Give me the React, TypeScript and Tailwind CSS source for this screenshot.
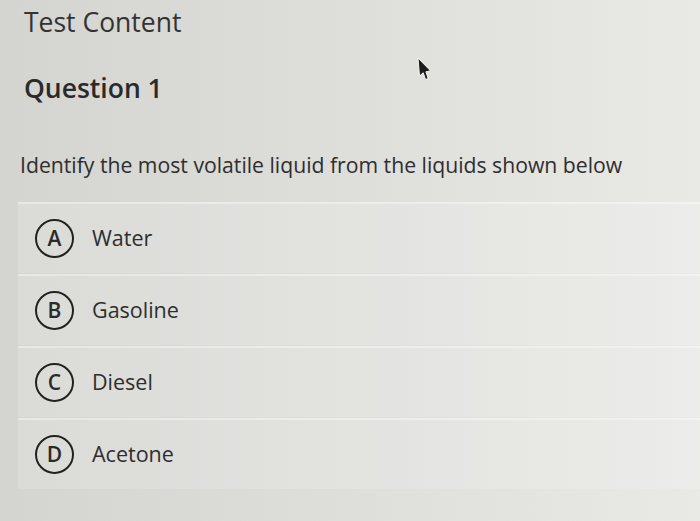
import React from 'react';

const OPTIONS = [
    { letter: 'A', label: 'Water' },
    { letter: 'B', label: 'Gasoline' },
    { letter: 'C', label: 'Diesel' },
    { letter: 'D', label: 'Acetone' },
];

export default function App() {
    return (
        <div
            className="relative w-[700px] h-[521px] overflow-hidden bg-linear-to-r from-[#d4d4d0] via-[#dededb] to-[#e9e9e6] text-[#2c2c2c]"
            style={{ fontFamily: '"Open Sans", "Noto Sans", sans-serif' }}
        >
            {/* Header */}
            <div className="pl-6 pt-[4px]">
                <h1 className="text-[26.5px] leading-[36px] font-normal text-[#333]">Test Content</h1>
                <h2 className="mt-[30px] text-[26.5px] leading-[36px] font-semibold text-[#2a2a2a]">Question 1</h2>
            </div>

            {/* Question */}
            <p className="pl-5 mt-[44px] text-[21.2px] leading-[30px] text-[#2e2e2e]">
                Identify the most volatile liquid from the liquids shown below
            </p>

            {/* Options */}
            <div className="ml-[18px] mt-[24px] flex flex-col gap-[3px]">
                {OPTIONS.map((opt) => (
                    <div
                        key={opt.letter}
                        className="h-[69px] flex items-center pl-[17px] bg-white/15 shadow-[0_-2px_0_rgba(255,255,255,0.45)]"
                    >
                        <span className="w-[39px] h-[39px] rounded-full border-2 border-[#222] flex items-center justify-center text-[21px] font-semibold text-[#2a2a2a] leading-none">
                            {opt.letter}
                        </span>
                        <span className="ml-[18px] text-[21.5px] font-medium text-[#2e2e2e]">{opt.label}</span>
                    </div>
                ))}
            </div>

            {/* Mouse cursor */}
            <svg
                className="absolute left-[415px] top-[56px] w-[18px] h-[26px]"
                viewBox="0 0 18 26"
            >
                <path
                    d="M3 2 L4.5 20 L8.2 16.8 L10.5 23.5 L13.2 22.5 L10.9 15.8 L15.5 14.8 Z"
                    fill="#1c1c1c"
                    stroke="#f4f4f4"
                    strokeWidth="1"
                />
            </svg>
        </div>
    );
}
